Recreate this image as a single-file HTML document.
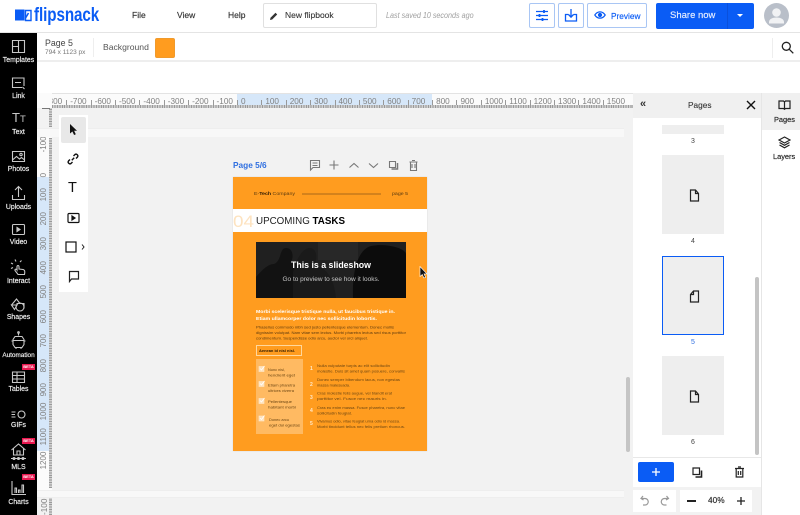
<!DOCTYPE html>
<html><head><meta charset="utf-8"><style>
*{box-sizing:border-box}
html,body{margin:0;padding:0;width:800px;height:515px;overflow:hidden;background:#f2f2f2;font-family:"Liberation Sans",sans-serif}
.a{position:absolute}
.t{position:absolute;white-space:nowrap;line-height:1}
#root{position:relative;width:800px;height:515px;overflow:hidden;filter:blur(.3px)}
.sl{position:absolute;left:0;width:37px;text-align:center;color:#f4f4f4;font-size:6.900px;line-height:9px;-webkit-text-stroke:.15px #f4f4f4}
.si{position:absolute;left:8px;width:21px;height:21px;fill:none;stroke:#c8c8c8;stroke-width:1.100}
.beta{position:absolute;left:22px;width:13px;height:6px;background:#e8174f;color:#fff;font-size:4px;line-height:6px;text-align:center;font-weight:bold}
.btn{position:absolute;top:3px;height:25px;background:#fff;border:1px solid #a9c6f4;border-radius:2px}
#hr{position:absolute;left:52px;top:93px;width:581px;height:15px;overflow:hidden;border-top:1px solid #e3e3e3}
#hr div{position:absolute;left:-10.200px;top:0;display:flex}
#hr span{flex:none;width:24.400px;padding-left:4px;height:14px;font-size:8.200px;line-height:15px;color:#808080;position:relative}
#hr span:before{content:"";position:absolute;left:0;top:6px;height:7px;width:1px;background:#999}
#vr{position:absolute;left:37px;top:137px;width:15px;height:351px;overflow:hidden}
#vr div{position:absolute;left:0;top:-8.900px;display:flex;flex-direction:column}
#vr span{flex:none;height:24.400px;width:11px;writing-mode:vertical-rl;transform:rotate(180deg);font-size:8px;line-height:13px;padding-top:0;color:#808080;white-space:nowrap}
.th{position:absolute;left:662px;width:62px;background:#eeeeee}
.num{position:absolute;left:662px;width:62px;text-align:center;font-size:7px;line-height:8px;color:#444}
.ic{position:absolute;fill:none;stroke:#333;stroke-width:1.200}
</style></head><body><div id="root">

<div class="a" style="left:0;top:0;width:800px;height:33px;background:#fff;border-bottom:1px solid #e4e4e4"></div>
<div class="a" style="left:37px;top:33px;width:763px;height:29px;background:#fff;border-bottom:2px solid #eeeeee"></div>
<div class="a" style="left:37px;top:62px;width:763px;height:31px;background:#fff"></div>

<svg class="a" style="left:14px;top:8px" width="18" height="14" viewBox="0 0 18 14"><path d="M1 1.500h9.500v11H1z" fill="#0a5cf5"/><path d="M11.500 2.500h5.500v10h-5.500z" fill="#fff" stroke="#0a5cf5" stroke-width="1.400"/><path d="M11.500 10l3-5" stroke="#0a5cf5" stroke-width="1.600"/></svg>
<div class="t" style="left:34px;top:5.500px;font-size:19px;font-weight:bold;color:#0a5cf5;transform:scaleX(.8);transform-origin:0 0;letter-spacing:-.1px">flipsnack</div>
<div class="t" style="left:132px;top:11px;font-size:8.500px;color:#333;-webkit-text-stroke:.15px #333">File</div>
<div class="t" style="left:177px;top:11px;font-size:8.500px;color:#333;-webkit-text-stroke:.15px #333">View</div>
<div class="t" style="left:228px;top:11px;font-size:8.500px;color:#333;-webkit-text-stroke:.15px #333">Help</div>
<div class="a" style="left:263px;top:3px;width:114px;height:25px;border:1px solid #e0e0e0;border-radius:2px;background:#fff"></div>
<svg class="a" style="left:269px;top:11px" width="10" height="10" viewBox="0 0 10 10"><path d="M1 9l.5-2.200L6.500 1.800l1.700 1.700-5 5z" fill="#333"/></svg>
<div class="t" style="left:285px;top:11px;font-size:8.500px;color:#333;-webkit-text-stroke:.1px #333">New flipbook</div>
<div class="t" style="left:386px;top:11.500px;font-size:8px;font-style:italic;color:#a0a0a0;transform:scaleX(.9);transform-origin:0 0">Last saved 10 seconds ago</div>

<div class="btn" style="left:529px;width:26px"></div>
<svg class="a" style="left:535px;top:9px" width="14" height="13" viewBox="0 0 14 13" fill="none" stroke="#0a5cf5" stroke-width="1.300"><path d="M1 2.500h12M1 6.500h12M1 10.500h12"/><path d="M9 1v3M4.500 5v3M7.500 9v3" stroke-width="1.800"/></svg>
<div class="btn" style="left:558px;width:26px"></div>
<svg class="a" style="left:564px;top:8px" width="14" height="15" viewBox="0 0 14 15" fill="none" stroke="#0a5cf5" stroke-width="1.300"><path d="M4.500 6.500h-3v6.500h11V6.500h-3"/><path d="M7 1v8M4.500 6.500L7 9.200 9.500 6.500"/></svg>
<div class="btn" style="left:587px;width:60px"></div>
<svg class="a" style="left:594px;top:10px" width="12" height="10" viewBox="0 0 12 10" fill="none" stroke="#0a5cf5" stroke-width="1.200"><path d="M.8 5C3.500.8 8.500.8 11.200 5 8.500 9.200 3.500 9.200.8 5z"/><circle cx="6" cy="5" r="1.500" fill="#0a5cf5"/></svg>
<div class="t" style="left:611px;top:11.500px;font-size:8.300px;color:#0a5cf5;-webkit-text-stroke:.15px #0a5cf5">Preview</div>
<div class="a" style="left:656px;top:3px;width:98px;height:26px;background:#0a5cf5;border-radius:2px"></div>
<div class="a" style="left:727px;top:3px;width:1px;height:26px;background:#0a50dc"></div>
<div class="t" style="left:670px;top:10.500px;font-size:9.500px;color:#e8efff;-webkit-text-stroke:.15px #e8efff">Share now</div>
<div class="a" style="left:737px;top:14px;width:0;height:0;border:3px solid transparent;border-top:3.500px solid #fff;border-bottom:0"></div>
<svg class="a" style="left:764px;top:3px" width="25" height="25" viewBox="0 0 25 25"><circle cx="12.500" cy="12.500" r="12.500" fill="#b9bfc9"/><circle cx="12.500" cy="9.500" r="4.300" fill="#f1f2f4"/><path d="M5 19c0-6 15-6 15 0v1.500H5z" fill="#f1f2f4"/></svg>

<div class="t" style="left:45px;top:38.500px;font-size:8.800px;color:#444">Page 5</div>
<div class="t" style="left:45px;top:49.500px;font-size:6.500px;color:#777">794 x 1123 px</div>
<div class="a" style="left:93px;top:38px;width:1px;height:19px;background:#eeeeee"></div>
<div class="t" style="left:103px;top:42.500px;font-size:8.600px;color:#555">Background</div>
<div class="a" style="left:155px;top:38px;width:20px;height:20px;background:#ff9c1f;border:1px solid #f09a2c;border-radius:2px"></div>
<div class="a" style="left:772px;top:38px;width:1px;height:20px;background:#eeeeee"></div>
<svg class="a" style="left:781px;top:41px" width="13" height="13" viewBox="0 0 13 13" fill="none" stroke="#222" stroke-width="1.300"><circle cx="5.300" cy="5.300" r="4"/><path d="M8.300 8.300l4 4"/></svg>

<div class="a" style="left:37px;top:93px;width:596px;height:422px;background:#f2f2f2"></div>
<div class="a" style="left:37px;top:128px;width:587px;height:9px;background:#f8f8f8;border-top:1px solid #eeeeee"></div>
<div class="a" style="left:37px;top:490px;width:587px;height:8px;background:#f8f8f8;border-top:1px solid #eeeeee;border-bottom:1px solid #eeeeee"></div>

<div class="a" style="left:37px;top:93px;width:596px;height:15px;background:#fbfbfb"></div>
<div class="a" style="left:237px;top:93px;width:195px;height:15px;background:#d6e7f9"></div>
<div id="hr"><div><span>-800</span><span>-700</span><span>-600</span><span>-500</span><span>-400</span><span>-300</span><span>-200</span><span>-100</span><span>0</span><span>100</span><span>200</span><span>300</span><span>400</span><span>500</span><span>600</span><span>700</span><span>800</span><span>900</span><span>1000</span><span>1100</span><span>1200</span><span>1300</span><span>1400</span><span>1500</span></div></div>
<div class="a" style="left:52px;top:105px;width:581px;height:3px;background:repeating-linear-gradient(90deg,#999 0 1px,#d0d0d0 1px 2.440px)"></div>

<div class="a" style="left:37px;top:137px;width:15px;height:353px;background:#fbfbfb"></div>
<div class="a" style="left:37px;top:177px;width:15px;height:274px;background:#d6e7f9"></div>
<div id="vr"><div><span>-100</span><span>0</span><span>100</span><span>200</span><span>300</span><span>400</span><span>500</span><span>600</span><span>700</span><span>800</span><span>900</span><span>1000</span><span>1100</span><span>1200</span></div></div>
<div class="a" style="left:49px;top:108px;width:3px;height:19px;background:repeating-linear-gradient(0deg,#999 0 1px,#d0d0d0 1px 2.440px)"></div>
<div class="a" style="left:49px;top:138px;width:3px;height:350px;background:repeating-linear-gradient(0deg,#999 0 1px,#d0d0d0 1px 2.440px)"></div>
<div class="a" style="left:42px;top:108px;width:8px;height:1px;background:#777"></div>
<div class="a" style="left:49px;top:498px;width:3px;height:17px;background:repeating-linear-gradient(0deg,#999 0 1px,#d0d0d0 1px 2.440px)"></div>
<div class="t" style="left:41px;top:515px;font-size:8.200px;color:#808080;transform:rotate(-90deg);transform-origin:0 0">-100</div>

<div class="a" style="left:59px;top:115px;width:29px;height:177px;background:#fff"></div>
<div class="a" style="left:61px;top:117px;width:25px;height:26px;background:#e8e8e8;border-radius:2px"></div>
<svg class="a" style="left:69px;top:123px" width="10" height="13" viewBox="0 0 10 13"><path d="M1 1v9.500l2.400-2 1.700 3.500 1.700-.8-1.700-3.400H8z" fill="#111"/></svg>
<svg class="ic" style="left:67px;top:153px;stroke:#111;stroke-width:1.400" width="12" height="12" viewBox="0 0 12 12"><path d="M4.800 7.200l2.400-2.400"/><path d="M6.500 3L8 1.500a1.800 1.800 0 012.500 2.500L9 5.500M5.500 9L4 10.500A1.800 1.800 0 011.500 8L3 6.500"/></svg>
<div class="t" style="left:68px;top:181px;font-size:14.500px;color:#111;font-weight:normal">T</div>
<svg class="ic" style="left:67px;top:212px;stroke:#111;stroke-width:1.200" width="13" height="12" viewBox="0 0 13 12"><rect x="1" y="1.500" width="11" height="9" rx="1"/><path d="M5 4l3 2-3 2z" fill="#111"/></svg>
<svg class="ic" style="left:65px;top:241px;stroke:#111;stroke-width:1.200" width="12" height="12" viewBox="0 0 12 12"><rect x="1" y="1" width="10" height="10"/></svg>
<svg class="ic" style="left:81px;top:244px;stroke:#222;stroke-width:1" width="4" height="6" viewBox="0 0 4 6"><path d="M1 .5l2 2.500-2 2.500"/></svg>
<svg class="ic" style="left:67px;top:270px;stroke:#222;stroke-width:1.200" width="13" height="13" viewBox="0 0 13 13"><path d="M2.500 1.500h9v7.500H4.500l-2 2.500z"/></svg>

<div class="a" style="left:626px;top:377px;width:4px;height:75px;background:#c5c5c5;border-radius:2px"></div>

<div class="t" style="left:233px;top:161px;font-size:8.300px;font-weight:bold;color:#2f6fe0">Page 5/6</div>
<svg class="a" style="left:308px;top:158px;fill:none;stroke:#777;stroke-width:1.100" width="112" height="15" viewBox="0 0 112 15">
<path d="M2.500 2.500h9v7H5l-2.500 2.500zM4.500 5h5M4.500 7.500h5"/>
<path d="M26 2.500v9M21.500 7h9"/>
<path d="M41.500 9.500l4.500-4 4.500 4M61 5.500l4.500 4 4.500-4"/>
<path d="M81.500 3.500h6v6h-6z"/><path d="M83.500 11h6V5" stroke-width="1.500"/>
<path d="M102 4h8M103 4v8.500h6V4M104.500 2.500h3M104.500 6v4M107.500 6v4" transform="translate(-.5 0)"/>
</svg>

<div class="a" style="left:233px;top:177px;width:194px;height:274px;background:#ff9c1f;box-shadow:0 0 1px #ccc"></div>
<div class="a" style="left:233px;top:209px;width:194px;height:23px;background:#fff"></div>
<svg class="a" style="left:233px;top:177px;filter:blur(.25px)" width="194" height="274" viewBox="0 0 194 274" font-family="'Liberation Sans',sans-serif">
<text x="21" y="18" font-size="4.500" fill="#5a3a10" textLength="41" lengthAdjust="spacingAndGlyphs">E-<tspan font-weight="bold" fill="#2a1a05">Tech</tspan> Company</text>
<rect x="69" y="16.500" width="79" height="1" fill="#a8691a"/>
<text x="159" y="18" font-size="4.500" fill="#5a3a10" textLength="16" lengthAdjust="spacingAndGlyphs">page 5</text>
<text x="0" y="50" font-size="16.500" fill="#fde3c0" textLength="21" lengthAdjust="spacingAndGlyphs">04</text>
<text x="23" y="47" font-size="9.800" fill="#222" textLength="89" lengthAdjust="spacingAndGlyphs">UPCOMING <tspan font-weight="bold" fill="#000">TASKS</tspan></text>
<rect x="23" y="65" width="150" height="56" fill="#202020"/>
<path d="M23 121V100c6-7 12-13 18-13 8-3 5-16 12-16 7 0 8 9 5 14 8 2 14 10 16 36z" fill="#121212"/>
<path d="M60 95c3-12 9-24 17-24 7 0 8 12 4 17 10 2 20 10 22 33H60z" fill="#1a1a1a"/>
<path d="M120 121c-1-25 4-48 18-52 15-3 34 2 35 8v44z" fill="#0c0c0c"/>
<path d="M85 65h40v18H85z" fill="#333" opacity=".45"/>
<text x="58" y="91" font-size="9.500" font-weight="bold" fill="#fff" textLength="80" lengthAdjust="spacingAndGlyphs">This is a slideshow</text>
<text x="49.500" y="104" font-size="6.300" fill="#c8c8c8" textLength="97" lengthAdjust="spacingAndGlyphs">Go to preview to see how it looks.</text>
<g font-weight="bold" fill="#fff" font-size="4.800"><text x="23" y="136" textLength="139" lengthAdjust="spacingAndGlyphs">Morbi scelerisque tristique nulla, ut faucibus tristique in.</text><text x="23" y="143" textLength="121" lengthAdjust="spacingAndGlyphs">Etiam ullamcorper dolor nec sollicitudin lobortis.</text></g>
<g fill="#5c3a10" font-size="3.800"><text x="23" y="151.500" textLength="138" lengthAdjust="spacingAndGlyphs">Phasellus commodo nibh sed justo pellentesque elementum. Donec mollis</text><text x="23" y="157" textLength="150" lengthAdjust="spacingAndGlyphs">dignissim volutpat. Nam vitae sem lectus. Morbi pharetra lectus sed risus porttitor</text><text x="23" y="162.700" textLength="112" lengthAdjust="spacingAndGlyphs">condimentum. Suspendisse odio arcu, auctor vel orci aliquet.</text></g>
<rect x="23.500" y="168.500" width="45" height="10" fill="none" stroke="#ffd79c" stroke-width="1"/>
<text x="26" y="174.800" font-size="3.800" font-weight="bold" fill="#2a1a05" textLength="36" lengthAdjust="spacingAndGlyphs">Aenean id nisl nisl.</text>
<rect x="23" y="182" width="47" height="75" fill="#ffba62"/>
<g fill="#ffe2bc" stroke="#ffe9cc" stroke-width=".6"><rect x="26" y="189.500" width="5" height="5"/><rect x="26" y="204.500" width="5" height="5"/><rect x="26" y="221.500" width="5" height="5"/><rect x="26" y="239" width="5" height="5"/></g>
<g fill="none" stroke="#fff" stroke-width=".8"><path d="M27 191.500l1.500 1.500 3-4M27 206.500l1.500 1.500 3-4M27 223.500l1.500 1.500 3-4M27 241l1.500 1.500 3-4"/></g>
<g fill="#6a4513" font-size="3.800"><text x="35" y="194" textLength="17" lengthAdjust="spacingAndGlyphs">Nunc nisl,</text><text x="35" y="199.500" textLength="27" lengthAdjust="spacingAndGlyphs">hendrerit eget</text><text x="35" y="209.500" textLength="27" lengthAdjust="spacingAndGlyphs">Etiam pharetra</text><text x="35" y="215" textLength="26" lengthAdjust="spacingAndGlyphs">ultrices viverra</text><text x="35" y="226" textLength="24" lengthAdjust="spacingAndGlyphs">Pellentesque</text><text x="35" y="231.500" textLength="28" lengthAdjust="spacingAndGlyphs">habitant morbi</text><text x="36" y="244" textLength="20" lengthAdjust="spacingAndGlyphs">Donec arcu</text><text x="36" y="249.500" textLength="31" lengthAdjust="spacingAndGlyphs">eget dui egestas</text></g>
<g fill="#ffe9cc" font-size="5" font-weight="bold"><text x="77" y="193">1</text><text x="77" y="209">2</text><text x="77" y="222">3</text><text x="77" y="235">4</text><text x="77" y="248">5</text></g>
<g fill="#6a4513" font-size="3.800"><text x="84" y="190" textLength="73" lengthAdjust="spacingAndGlyphs">Nulla vulputate turpis ac elit sollicitudin</text><text x="84" y="195.500" textLength="88" lengthAdjust="spacingAndGlyphs">molestie. Duis sit amet quam posuere, convallis</text><text x="84" y="204" textLength="83" lengthAdjust="spacingAndGlyphs">Donec semper bibendum lacus, non egestas</text><text x="84" y="209.500" textLength="33" lengthAdjust="spacingAndGlyphs">massa malesuada.</text><text x="84" y="217.500" textLength="75" lengthAdjust="spacingAndGlyphs">Cras molestie felis augue, vel blandit erat</text><text x="84" y="223" textLength="70" lengthAdjust="spacingAndGlyphs">porttitor vel. Fusce nec mauris in.</text><text x="84" y="232" textLength="88" lengthAdjust="spacingAndGlyphs">Cras eu enim massa. Fusce pharetra, nunc vitae</text><text x="84" y="237.500" textLength="35" lengthAdjust="spacingAndGlyphs">sollicitudin feugiat.</text><text x="84" y="245.500" textLength="83" lengthAdjust="spacingAndGlyphs">Vivamus odio, vitae feugiat urna odio id massa.</text><text x="84" y="251" textLength="88" lengthAdjust="spacingAndGlyphs">Morbi tincidunt tellus nec felis pretium rhoncus.</text></g>
</svg>
<svg class="a" style="left:419px;top:266px" width="9" height="13" viewBox="0 0 9 13"><path d="M1 .5v10l2.300-2 1.600 3.500 1.700-.8-1.600-3.300H8z" fill="#111" stroke="#fff" stroke-width=".6"/></svg>

<div class="a" style="left:633px;top:93px;width:129px;height:394px;background:#fff;border-right:1px solid #e6e6e6"></div>
<div class="a" style="left:633px;top:93px;width:128px;height:25px;background:#f0f0f0"></div>
<div class="t" style="left:640px;top:99px;font-size:11px;color:#333;font-weight:bold">«</div>
<div class="t" style="left:688px;top:101px;font-size:8.300px;color:#333;-webkit-text-stroke:.1px #333">Pages</div>
<svg class="ic" style="left:746px;top:100px;stroke:#111;stroke-width:1.400" width="10" height="10" viewBox="0 0 10 10"><path d="M1 1l8 8M9 1l-8 8"/></svg>
<div class="th" style="top:125px;height:9px"></div><div class="num" style="top:138px">3</div>
<div class="th" style="top:155px;height:79px"></div><div class="num" style="top:238px">4</div>
<div class="th" style="top:256px;height:79px;border:1px solid #0a5cf5"></div><div class="num" style="top:339px;color:#2f6fe0">5</div>
<div class="th" style="top:356px;height:79px"></div><div class="num" style="top:439px">6</div>
<svg class="ic" style="left:689px;top:189px;stroke:#222" width="11" height="13" viewBox="0 0 11 13"><path d="M1.500 1h5l3 3.500V12h-8zM6.500 1v3.500h3"/></svg>
<svg class="ic" style="left:689px;top:290px;stroke:#222" width="11" height="13" viewBox="0 0 11 13"><path d="M4.500 1h5v11h-8V4.500zM4.500 1v3.500h-3"/></svg>
<svg class="ic" style="left:689px;top:390px;stroke:#222" width="11" height="13" viewBox="0 0 11 13"><path d="M1.500 1h5l3 3.500V12h-8zM6.500 1v3.500h3"/></svg>
<div class="a" style="left:755px;top:277px;width:4px;height:178px;background:#c4c4c4;border-radius:2px"></div>
<div class="a" style="left:633px;top:457px;width:128px;height:1px;background:#e8e8e8"></div>
<div class="a" style="left:638px;top:462px;width:36px;height:20px;background:#0a5cf5;border-radius:2px"></div>
<svg class="a" style="left:651px;top:467px" width="10" height="10" viewBox="0 0 10 10"><path d="M5 1v8M1 5h8" stroke="#fff" stroke-width="1.300"/></svg>
<svg class="ic" style="left:692px;top:467px;stroke:#222" width="11" height="11" viewBox="0 0 11 11"><path d="M1 1h6.500v6.500H1z"/><path d="M9.500 3.500v6.500h-6" stroke-width="1.600"/></svg>
<svg class="ic" style="left:734px;top:466px;stroke:#222" width="11" height="12" viewBox="0 0 11 12"><path d="M1 2.500h9M2.200 2.500V11h6.600V2.500M4 1h3M4.300 5v4M6.700 5v4"/></svg>

<div class="a" style="left:633px;top:487px;width:129px;height:28px;background:#f2f2f2;border-right:1px solid #e6e6e6"></div>
<div class="a" style="left:633px;top:490px;width:43px;height:22px;background:#fff"></div>
<div class="a" style="left:680px;top:490px;width:72px;height:22px;background:#fff"></div>
<svg class="ic" style="left:640px;top:495px;stroke:#999" width="30" height="11" viewBox="0 0 30 11"><path d="M3 1L1 3.500 3.500 5M1.500 3.500H5a3 3 0 010 6.500H3M26.500 1l2 2.500L26 5M28 3.500h-3.500a3 3 0 000 6.500h2"/></svg>
<div class="a" style="left:687px;top:500px;width:9px;height:1.500px;background:#222"></div>
<div class="t" style="left:708px;top:496px;font-size:8.300px;color:#333;-webkit-text-stroke:.2px #333">40%</div>
<svg class="a" style="left:736px;top:496px" width="10" height="10" viewBox="0 0 10 10"><path d="M5 1v8M1 5h8" stroke="#222" stroke-width="1.300"/></svg>

<div class="a" style="left:762px;top:93px;width:38px;height:422px;background:#fff"></div>
<div class="a" style="left:762px;top:93px;width:38px;height:37px;background:#f0f0f0"></div>
<svg class="ic" style="left:778px;top:100px;stroke:#222" width="13" height="10" viewBox="0 0 13 10"><path d="M1 1h4.500l1 1 1-1H12v7.500H7.500l-1 .8-1-.8H1zM6.500 2v7"/></svg>
<div class="t" style="left:774px;top:116px;font-size:7.400px;color:#222;-webkit-text-stroke:.15px #222">Pages</div>
<svg class="ic" style="left:778px;top:136px;stroke:#222" width="13" height="13" viewBox="0 0 13 13"><path d="M6.500 1l5.500 3-5.500 3L1 4zM1.500 6.500L6.500 9.300 11.500 6.500M1.500 9l5 2.800 5-2.800"/></svg>
<div class="t" style="left:773px;top:153px;font-size:7.400px;color:#222;-webkit-text-stroke:.15px #222">Layers</div>

<div class="a" style="left:0;top:33px;width:37px;height:482px;background:#000"></div>
<svg class="si" style="top:36px" viewBox="0 0 21 21"><path d="M4.500 4.500h12v12h-12zM4.500 10.500h6M10.500 4.500v12"/></svg><div class="sl" style="top:55.500px">Templates</div>
<svg class="si" style="top:73px" viewBox="0 0 21 21"><path d="M16 13V5H4.500v9.500H14M7 9.500h6M14.500 14l2 2"/></svg><div class="sl" style="top:91.500px">Link</div>
<div class="t" style="left:12px;top:111px;font-size:13px;color:#c8c8c8">T<span style="font-size:9.500px">T</span></div><div class="sl" style="top:128px">Text</div>
<svg class="si" style="top:146px" viewBox="0 0 21 21"><path d="M4.500 5.500h12v10h-12zM4.500 14l4-3.500 3 2.500 2-1.500 3 2.500"/><circle cx="13" cy="8.500" r="1.200"/></svg><div class="sl" style="top:164.500px">Photos</div>
<svg class="si" style="top:183px" viewBox="0 0 21 21"><path d="M4.500 12v4.500h12V12M10.500 14V4M7 7l3.500-3.500L14 7"/></svg><div class="sl" style="top:202.500px">Uploads</div>
<svg class="si" style="top:219px" viewBox="0 0 21 21"><rect x="4.500" y="5.500" width="12" height="10" rx="1"/><path d="M9 8.500l3 2-3 2z" fill="#c8c8c8"/></svg><div class="sl" style="top:238px">Video</div>
<svg class="si" style="top:257px" viewBox="0 0 21 21"><path d="M9 10c0-2 2-2 2 0v2l4 .5c2 .5 2 2 1.500 5H10L7 13.500c-.5-1 1-2 2-.5zM5 7l-2-1M8 4.500L7 2.500M5 10.500l-2 1M12 5l1.500-1.500"/></svg><div class="sl" style="top:276.500px">Interact</div>
<svg class="si" style="top:294px" viewBox="0 0 21 21"><path d="M3.500 11l5-6 3.500 4.500M8.500 9.500h7.500v5M3.500 11h5.500l-2.500 4.500z"/><circle cx="12" cy="13" r="4"/></svg><div class="sl" style="top:312.500px">Shapes</div>
<svg class="si" style="top:330px" viewBox="0 0 21 21"><path d="M10.500 2.500v3M7 6.500h7l2 3v5l-2 3H7l-2-3v-5zM5 11H3.500M16 11h1.500M5.500 10.500h10"/><circle cx="10.500" cy="2.500" r=".8"/><path d="M8 17.500v1.500M13 17.500v1.500"/></svg><div class="sl" style="top:350.500px;font-size:6.400px">Automation</div>
<div class="beta" style="top:364px">BETA</div>
<svg class="si" style="top:367px" viewBox="0 0 21 21"><path d="M4.500 5h12v10.500h-12zM4.500 8.500h12M4.500 12h12M9 5v10.500"/></svg><div class="sl" style="top:384.500px">Tables</div>
<svg class="si" style="top:404px" viewBox="0 0 21 21"><circle cx="13.500" cy="10.500" r="3.500"/><path d="M3.500 8h4M3.500 10.500h3.500M3.500 13h4"/></svg><div class="sl" style="top:420.500px">GIFs</div>
<div class="beta" style="top:438px">BETA</div>
<svg class="si" style="top:441px" viewBox="0 0 21 21"><path d="M3.500 9l7-6 7 6M5.500 7.500V14h10V7.500M9 14v-4h3v4M3 17.500h15"/><circle cx="6" cy="17.500" r="1"/><circle cx="10.500" cy="17.500" r="1"/><circle cx="15" cy="17.500" r="1"/></svg><div class="sl" style="top:462.500px">MLS</div>
<div class="beta" style="top:474px">BETA</div>
<svg class="si" style="top:477px" viewBox="0 0 21 21"><path d="M4 4v13.500h14M7 16v-5h1.500v5M10.500 16v-3H12v3M14 16V8h1.500v8"/></svg><div class="sl" style="top:497.500px">Charts</div>
</div></body></html>
